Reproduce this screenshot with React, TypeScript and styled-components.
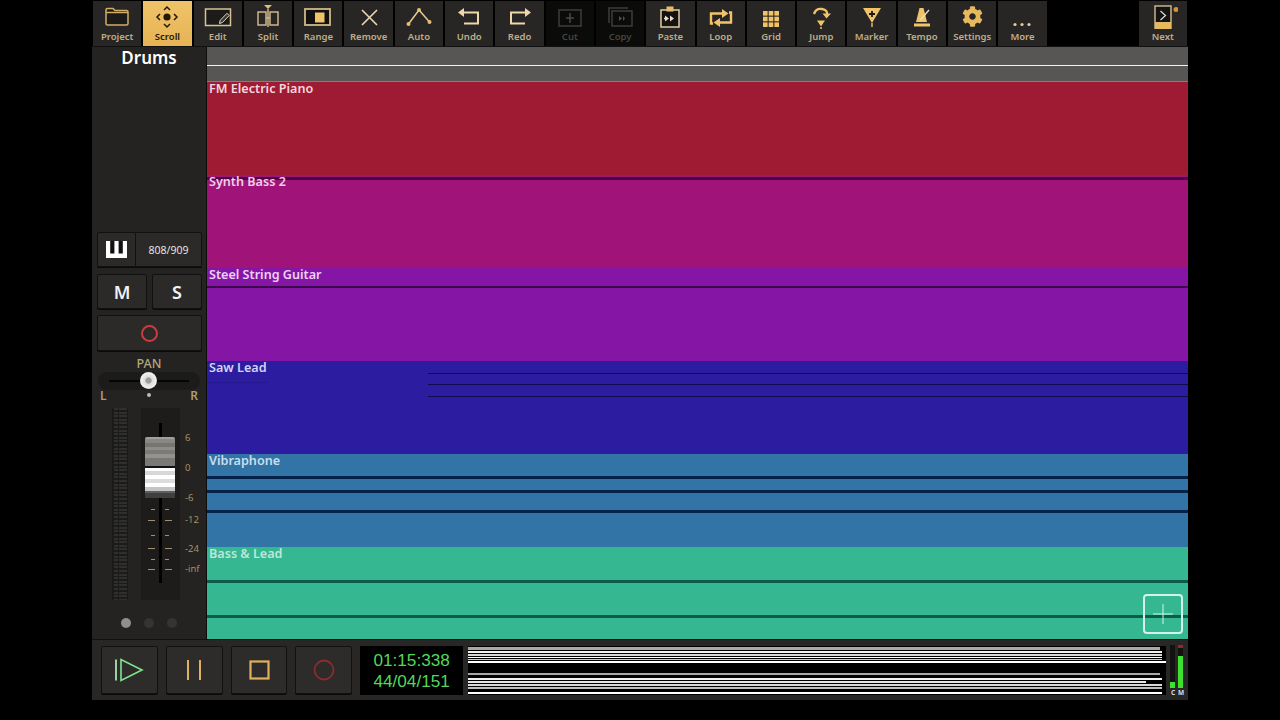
import React from "react";
import styled, { createGlobalStyle } from "styled-components";
import { FaCog } from "react-icons/fa";

const GOLD = "#e6bc6e";
const Global = createGlobalStyle`
  html, body { margin: 0; padding: 0; background: #000; }
  #root { width: 1280px; height: 720px; overflow: hidden; }
`;
const Page = styled.div`
  width: 1280px; height: 720px; background: #000; display: flex; justify-content: center;
  font-family: "Noto Sans", "Open Sans", sans-serif;
`;
const Frame = styled.div`
  width: 1096px; height: 700px; display: flex; flex-direction: column; background: #000;
`;
const Toolbar = styled.div`
  height: 47px; flex: none; display: flex; justify-content: space-between; padding: 1px 1px 0; box-sizing: border-box;
  border-bottom: 1px solid #111;
`;
const ToolGroup = styled.div` display: flex; gap: 2px; `;
const ToolButton = styled.div<{ $active?: boolean; $dim?: boolean }>`
  width: 48.3px; height: 45px; display: flex; flex-direction: column; align-items: center; box-sizing: border-box; padding-top: 4px;
  background: ${p => p.$active ? "linear-gradient(#f0c368,#e6b355)" : p.$dim ? "#0b0b0a" : "#272625"};
  color: ${p => p.$active ? "#241a08" : p.$dim ? "#45453f" : "#bfae88"};
  svg { display: block; flex: none; }
`;
const ToolLabel = styled.span`
  font-size: 9.5px; font-weight: 600; line-height: 12px; margin-top: 2px; white-space: nowrap;
`;
const Middle = styled.div` flex: 1; display: flex; min-height: 0; `;
const Panel = styled.div`
  width: 114px; flex: none; background: #242322; border-right: 1px solid #0d0d0d; display: flex; flex-direction: column; align-items: center;
  box-sizing: content-box;
`;
const Title = styled.div`
  font-size: 17px; font-weight: 600; line-height: 22px; color: #fff; height: 185px; text-align: center; width: 114px;
`;
const PanelBlock = styled.div`
  width: 105px; margin-left: 1px; display: flex; box-shadow: 0 1px 0 #0a0a0a;
`;
const KitButton = styled.div`
  width: 39px; height: 35px; background: #2b2a29; border: 1px solid #111; border-radius: 2px 0 0 2px; box-sizing: border-box;
  display: flex; align-items: center; justify-content: center;
`;
const KitName = styled.div`
  flex: 1; height: 35px; background: #2b2a29; border: 1px solid #111; border-left: 0; border-radius: 0 2px 2px 0; box-sizing: border-box;
  display: flex; align-items: center; justify-content: center; color: #eee; font-size: 10.500px; font-family: "Open Sans", sans-serif;
`;
const SoloRow = styled.div` width: 105px; margin-top: 7px; margin-left: 1px; display: flex; gap: 5px; `;
const SoloButton = styled.div`
  flex: 1; height: 35px; background: #2b2a29; border: 1px solid #111; border-radius: 2px; box-sizing: border-box; box-shadow: 0 1px 0 #0a0a0a;
  display: flex; align-items: center; justify-content: center; color: #f2f2f2; font-size: 18px; font-weight: 600;
`;
const RecButton = styled.div`
  width: 105px; height: 36px; margin-top: 6px; margin-left: 1px; background: #2b2a29; border: 1px solid #111; border-radius: 2px; box-sizing: border-box; box-shadow: 0 1px 0 #0a0a0a;
  display: flex; align-items: center; justify-content: center;
`;
const RecRing = styled.div`
  width: 17px; height: 17px; border: 2px solid #cf3a3a; border-radius: 50%; box-sizing: border-box;
`;
const PanHead = styled.div`
  color: #b9a57c; font-size: 12.500px; font-weight: 500; line-height: 14px; margin-top: 6px; height: 14px;
`;
const PanArea = styled.div` position: relative; width: 102px; height: 34px; margin-top: 1px; `;
const PanTrough = styled.div`
  height: 18px; border-radius: 9px; background: #1b1b1a; display: flex; align-items: center; justify-content: center;
`;
const PanLine = styled.div` width: 80px; height: 2px; background: #050505; `;
const PanKnob = styled.div`
  position: absolute; left: 42px; top: 0; width: 17px; height: 17px; border-radius: 50%;
  background: radial-gradient(circle at 50% 50%, #9d9d9d 0 22%, #dcdcdc 30%, #f0f0f0 60%, #b5b5b5 100%);
`;
const PanLetter = styled.span<{ $right?: boolean }>`
  position: absolute; top: 17px; ${p => p.$right ? "right: 2px" : "left: 2px"}; color: #b09b70; font-size: 12px; font-weight: 600; line-height: 14px;
`;
const PanDot = styled.div`
  position: absolute; left: 49px; top: 21px; width: 4px; height: 4px; background: #bbb; border-radius: 50%;
`;
const MixRow = styled.div` position: relative; width: 114px; height: 194px; margin-top: 2px; flex: none; `;
const MeterTrack = styled.div`
  position: absolute; left: 20px; top: 0; width: 16px; height: 192px; background: #1a1a19;
  background-image: linear-gradient(90deg, transparent 6.500px, #1a1a19 6.500px 7.500px, transparent 7.500px), repeating-linear-gradient(#302f2e 0 2px, #1c1c1b 2px 3.600px);
  background-size: 100% 100%, 13px 100%; background-repeat: no-repeat; background-position: center;
`;
const FaderWell = styled.div`
  position: absolute; left: 49px; top: 0; width: 39px; height: 192px; background: #1d1c1b;
`;
const FaderSlot = styled.div`
  position: absolute; left: 66.500px; top: 15px; width: 3px; height: 160px; background: #000;
`;
const Tick = styled.div<{ $y: number; $w: number }>`
  position: absolute; top: ${p => p.$y}px; width: 26px; left: 55px; height: 1px; display: flex; justify-content: center; gap: 10px;
  &::before, &::after { content: ""; width: ${p => p.$w}px; height: 1px; background: #a09070; }
`;
const FaderCap = styled.div`
  position: absolute; left: 53px; top: 29px; width: 30px; height: 61px; border-radius: 2px 2px 1px 1px; overflow: hidden;
  background: linear-gradient(#a2a09c 0 2px, #8a8884 2px 6px, #77756f 6px 10px, #8f8d89 10px 13px, #7d7b78 13px 17px, #94928f 17px 21px, #7b7976 21px 29px, #111 29px 31px,
    #fff 31px 34px, #d7d7d7 34px 38px, #fff 38px 42px, #dcdcdc 42px 46px, #fff 46px 50px, #c4c4c4 50px 54px, #5e5e5c 54px 56px, #403f3e 56px 61px);
`;
const Scale = styled.span<{ $y: number }>`
  position: absolute; left: 93px; top: ${p => p.$y}px; color: #ad9866; font-size: 9.500px; line-height: 12px; font-family: "Open Sans", sans-serif;
`;
const DotRow = styled.div` display: flex; gap: 13px; margin-top: 16px; `;
const Led = styled.div<{ $on?: boolean }>`
  width: 10px; height: 10px; border-radius: 50%; background: ${p => p.$on ? "#8f8f8d" : "#353432"};
`;
const Tracks = styled.div` flex: 1; position: relative; display: flex; flex-direction: column; min-width: 0; `;
const Lane = styled.div<{ $bg: string; $h: number }>`
  position: relative; height: ${p => p.$h}px; flex: none; background: ${p => p.$bg};
`;
const LaneLabel = styled.span<{ $c: string }>`
  position: absolute; z-index: 2; left: 2px; top: -2px; font-size: 12.600px; font-weight: 600; line-height: 18px; color: ${p => p.$c};
`;
const LaneLine = styled.div<{ $y: number; $c: string; $h?: number; $x?: number; $w?: number }>`
  position: absolute; left: ${p => p.$x ?? 0}px; ${p => p.$w ? `width: ${p.$w}px` : "right: 0"}; top: ${p => p.$y}px; height: ${p => p.$h ?? 3}px; background: ${p => p.$c};
`;
const AddButton = styled.div`
  position: absolute; z-index: 3; right: 5px; bottom: 5px; width: 40px; height: 40px; box-sizing: border-box; border: 2px solid #d3f3ea; border-radius: 4px;
  display: flex; align-items: center; justify-content: center;
`;
const Transport = styled.div`
  height: 61px; flex: none; background: #282726; border-top: 1px solid #101010; box-sizing: border-box; display: flex; align-items: flex-start; padding: 6px 0 0 9px;
`;
const TransButton = styled.div`
  width: 57px; height: 48px; margin-right: 8px; box-sizing: border-box; background: #2d2c2b; border: 1px solid #111; border-radius: 2px; box-shadow: 0 1px 0 #0a0a0a;
  display: flex; align-items: center; justify-content: center;
`;
const Clock = styled.div`
  width: 103px; height: 49px; background: #000; color: #52d85c; display: flex; flex-direction: column; align-items: center; justify-content: center;
  font-family: "Liberation Sans", sans-serif; font-size: 17.200px; line-height: 21px; padding-top: 1px; box-sizing: border-box;
`;
const Overview = styled.div`
  width: 698px; height: 49px; margin-left: 5px; background: #000; padding-top: 1px; box-sizing: border-box; display: flex; flex-direction: column;
`;
const Stripe = styled.div<{ $w: number; $h: number; $c: string; $m: number }>`
  width: ${p => p.$w}px; height: ${p => p.$h}px; background: ${p => p.$c}; margin-top: ${p => p.$m}px; flex: none;
`;
const Meters = styled.div` width: 22px; height: 54px; position: relative; flex: none; `;
const MeterBar = styled.div<{ $x: number; $h: number }>`
  position: absolute; left: ${p => p.$x}px; bottom: 12px; width: 5px; height: ${p => p.$h}px; background: #3fe02f;
`;
const MeterSlot = styled.div<{ $x: number }>`
  position: absolute; left: ${p => p.$x}px; top: -1px; bottom: 12px; width: 5px; background: #121211;
`;
const MeterPeak = styled.div`
  position: absolute; left: 12px; top: -1px; width: 5px; height: 3px; background: #8c2a33;
`;
const MeterLetter = styled.span<{ $x: number }>`
  position: absolute; left: ${p => p.$x}px; bottom: 3px; color: #ddd; font-size: 6.500px; font-weight: 700; line-height: 8px;
`;

const S: React.FC<React.PropsWithChildren<{ c?: string }>> = ({ children, c = GOLD }) => (
  <svg width="30" height="24" viewBox="0 0 30 24" fill="none" stroke={c} strokeWidth="1.500">{children}</svg>
);
const Folder = () => <S c="#d2ad68"><path d="M4 7V5q0-1.500 1.500-1.500H11L13 5.500H24.500Q26 5.500 26 7V18.500Q26 20 24.500 20H5.500Q4 20 4 18.500Z" fill="#1c1b1a" /><path d="M4 7.500H26" /></S>;
const Scroll = () => <S c="#241a08"><circle cx="15" cy="12" r="3.600" fill="#241a08" stroke="none" /><path d="M12 5l3-3 3 3M12 19l3 3 3-3M8 9l-3 3 3 3M22 9l3 3-3 3" /></S>;
const Edit = () => <S c="#d9c294"><rect x="2.500" y="4" width="25" height="16.500" fill="#1c1b1a" /><path d="M16.500 18.500l.7-3.200 6.800-7 2.200 2.200-6.800 7Z" stroke="#e6dcc4" strokeWidth="1" fill="#3a3935" /></S>;
const Split = () => <S c="#cdb78c"><path d="M11 0h8l-4 4Z" fill={GOLD} stroke="none" /><path d="M13 7H5v13h8ZM17 7h8v13h-8ZM15 4v18M13 13h4" /></S>;
const Range = () => <S><rect x="2" y="4" width="25" height="16" fill="#111" stroke="#d2b888" strokeWidth="1.800" /><rect x="12" y="7.500" width="9.500" height="10" fill="#f0c368" stroke="none" /></S>;
const Remove = () => <S c="#ecd8ae"><path d="M8 5l15 15M23 5L8 20" strokeWidth="1.600" /></S>;
const Auto = () => <S c="#e4c88e"><path d="M4.500 19L15 5l10.500 12" /><circle cx="4.500" cy="19" r="2" fill={GOLD} stroke="none" /><circle cx="15" cy="5" r="2" fill={GOLD} stroke="none" /><circle cx="25.500" cy="17" r="2" fill={GOLD} stroke="none" /></S>;
const Undo = () => <S c="#eed7a8"><path d="M6 7.500H24V18.500H10" strokeWidth="2" /><path d="M10 3L4 7.500 10 12" fill="#eed7a8" stroke="none" /></S>;
const Redo = () => <S c="#eed7a8"><path d="M23 7.500H6V18.500H20" strokeWidth="2" /><path d="M20 3L26 7.500 20 12" fill="#eed7a8" stroke="none" /></S>;
const Cut = () => <S c="#3e3e39"><rect x="4" y="5" width="22" height="16" /><path d="M15 8v10M11 13h8" stroke="#4a4a44" /></S>;
const Copy = () => <S c="#3e3e39"><path d="M4 18V3H23" /><rect x="7" y="6" width="20" height="15" /><path d="M14 11l3 2.500-3 2.500ZM18 11l2 2.500-2 2.500Z" fill="#50504a" stroke="none" /></S>;
const Paste = () => <S c="#e2cda0"><rect x="6" y="5" width="18" height="17" fill="#141312" /><rect x="11.500" y="1.500" width="7" height="5" fill="#e6bc6e" stroke="none" /><path d="M10 10.500l4 3-4 3ZM15 10.500l4 3-4 3Z" fill="#eadfc6" stroke="none" /><path d="M9 13.500h2" stroke="#eadfc6" /></S>;
const Loop = () => <S c="#f0c368"><path d="M7 18.500H5V8.500H18" strokeWidth="2.400" /><path d="M16 4l6.500 4.500L16 13Z" fill="#f0c368" stroke="none" /><path d="M23 7.500H25V17.500H12" strokeWidth="2.400" /><path d="M14 13l-6.500 4.500L14 22Z" fill="#f0c368" stroke="none" /></S>;
const Grid = () => {
  const cells: number[][] = [];
  for (let r = 0; r < 3; r++) for (let k = 0; k < 3; k++) cells.push([k, r]);
  return <S>{cells.map(([k, r]) => <rect key={`${k}${r}`} x={7 + k * 5.700} y={6 + r * 5.700} width="4.600" height="4.600" fill="#f0c368" stroke="none" />)}</S>;
};
const Jump = () => <S c="#f0c368"><path d="M8 9q2-6 8-5t5 6" strokeWidth="2.400" /><path d="M16.500 8.500h8.500l-4.500 5Z" fill="#f0c368" stroke="none" /><path d="M11 15.500h8l-4 6Z" fill="#f0c368" stroke="none" /><path d="M15 22v2" /></S>;
const Marker = () => <S><path d="M6 3h18l-9 15Z" fill="#f0c368" stroke="none" /><path d="M15 6v6M12 9h6" stroke="#1c1b1a" strokeWidth="1.800" /><path d="M15 18v4" strokeWidth="1.500" /></S>;
const Tempo = () => <S><path d="M12.500 3h4l3.500 14H9Z" fill="#f0c368" stroke="none" /><path d="M13.500 15L22 5" stroke="#eee0c0" strokeWidth="1.300" /><path d="M7 18.500h16v3H7Z" fill="#f0c368" stroke="none" /></S>;
const Dots = () => <S><circle cx="8" cy="19.500" r="1.600" fill="#e4cc98" stroke="none" /><circle cx="15" cy="19.500" r="1.600" fill="#e4cc98" stroke="none" /><circle cx="22" cy="19.500" r="1.600" fill="#e4cc98" stroke="none" /></S>;
const Gear = () => <FaCog size={21} color="#e6b95f" style={{ margin: "1px 0 2px" }} />;
const Next = () => <S c="#c9b48a"><rect x="7" y="1" width="16" height="23" fill="#141312" /><path d="M7 17h16v7H7Z" fill="#e6b95f" stroke="none" /><path d="M12.500 6l5 4.500-5 4.500" stroke="#ddd" strokeWidth="1.200" /><circle cx="28" cy="4.500" r="2.500" fill="#d99030" stroke="none" /></S>;

const tools: { name: string; icon: React.ReactNode; active?: boolean; dim?: boolean }[] = [
  { name: "Project", icon: <Folder /> }, { name: "Scroll", icon: <Scroll />, active: true }, { name: "Edit", icon: <Edit /> },
  { name: "Split", icon: <Split /> }, { name: "Range", icon: <Range /> }, { name: "Remove", icon: <Remove /> }, { name: "Auto", icon: <Auto /> },
  { name: "Undo", icon: <Undo /> }, { name: "Redo", icon: <Redo /> }, { name: "Cut", icon: <Cut />, dim: true }, { name: "Copy", icon: <Copy />, dim: true },
  { name: "Paste", icon: <Paste /> }, { name: "Loop", icon: <Loop /> }, { name: "Grid", icon: <Grid /> }, { name: "Jump", icon: <Jump /> },
  { name: "Marker", icon: <Marker /> }, { name: "Tempo", icon: <Tempo /> }, { name: "Settings", icon: <Gear /> }, { name: "More", icon: <Dots /> },
];

type Ln = { y: number; c: string; h?: number; x?: number; w?: number };
const lanes: { name: string; bg: string; c: string; h: number; lines: Ln[] }[] = [
  { name: "FM Electric Piano", bg: "#9f1a33", c: "#f3d8dd", h: 93, lines: [] },
  { name: "Synth Bass 2", bg: "#a0147a", c: "#f3cfe8", h: 93, lines: [{ y: 2, c: "#48083f", h: 3 }] },
  { name: "Steel String Guitar", bg: "#8516a5", c: "#ecd2f4", h: 93, lines: [{ y: 18, c: "#3a0a4c", h: 2 }] },
  { name: "Saw Lead", bg: "#2b1ca0", c: "#d6d2f4", h: 93, lines: [
    { y: 12, c: "#100a50", h: 1, x: 221 }, { y: 23, c: "#100a50", h: 1, x: 221 }, { y: 35, c: "#100a50", h: 1, x: 221 }, { y: 21, c: "#241890", h: 1, w: 61 },
  ] },
  { name: "Vibraphone", bg: "#3274a6", c: "#c9deec", h: 93, lines: [{ y: 22, c: "#04214a" }, { y: 36, c: "#04214a" }, { y: 56, c: "#04214a" }] },
  { name: "Bass & Lead", bg: "#35b892", c: "#bfe6d9", h: 92, lines: [{ y: 33, c: "#0d5b49" }, { y: 68, c: "#0d5b49" }] },
];

const stripes = [
  { w: 692, h: 3, c: "#a8a8a8", m: 0 }, { w: 694, h: 2, c: "#f0f0f0", m: 1 }, { w: 694, h: 2, c: "#d8d8d8", m: 1 },
  { w: 694, h: 1, c: "#fff", m: 1 }, { w: 694, h: 1, c: "#d0d0d0", m: 1 }, { w: 698, h: 2, c: "#fff", m: 1 },
  { w: 692, h: 2, c: "#a8a8a8", m: 10 }, { w: 694, h: 2, c: "#f0f0f0", m: 3 }, { w: 678, h: 2, c: "#e4e4e4", m: 1 },
  { w: 694, h: 2, c: "#d8d8d8", m: 1 }, { w: 694, h: 2, c: "#bdbdbd", m: 1 }, { w: 694, h: 2, c: "#fff", m: 3 },
];

const ticks = [[101, 4], [112, 7], [127, 4], [140, 7], [151, 4], [161, 7]];
const scale = [[24, "6"], [54, "0"], [84, "-6"], [106, "-12"], [135, "-24"], [155, "-inf"]] as const;

export default function App() {
  return (
    <Page>
      <Global />
      <Frame>
        <Toolbar>
          <ToolGroup>
            {tools.map(t => (
              <ToolButton key={t.name} $active={t.active} $dim={t.dim}>
                {t.icon}
                <ToolLabel>{t.name}</ToolLabel>
              </ToolButton>
            ))}
          </ToolGroup>
          <ToolButton><Next /><ToolLabel>Next</ToolLabel></ToolButton>
        </Toolbar>
        <Middle>
          <Panel>
            <Title>Drums</Title>
            <PanelBlock>
              <KitButton>
                <svg width="21" height="17" viewBox="0 0 21 17"><path d="M0 0h21v17H0Z" fill="#fff" /><path d="M4.200 0h4.200v12.500H4.200ZM12.600 0h4.200v12.500h-4.200Z" fill="#111" /></svg>
              </KitButton>
              <KitName>808/909</KitName>
            </PanelBlock>
            <SoloRow><SoloButton>M</SoloButton><SoloButton>S</SoloButton></SoloRow>
            <RecButton><RecRing /></RecButton>
            <PanHead>PAN</PanHead>
            <PanArea>
              <PanTrough><PanLine /></PanTrough>
              <PanKnob />
              <PanLetter>L</PanLetter>
              <PanLetter $right>R</PanLetter>
              <PanDot />
            </PanArea>
            <MixRow>
              <MeterTrack />
              <FaderWell />
              <FaderSlot />
              {ticks.map(([y, w]) => <Tick key={y} $y={y} $w={w} />)}
              <FaderCap />
              {scale.map(([y, t]) => <Scale key={t} $y={y}>{t}</Scale>)}
            </MixRow>
            <DotRow><Led $on /><Led /><Led /></DotRow>
          </Panel>
          <Tracks>
            <Lane $bg="#585654" $h={35}>
              <LaneLine $y={18} $c="#f2f2f2" $h={1} />
              <LaneLine $y={34} $c="#8c7a7c" $h={1} />
            </Lane>
            {lanes.map(l => (
              <Lane key={l.name} $bg={l.bg} $h={l.h}>
                {l.lines.map(ln => <LaneLine key={ln.y} $y={ln.y} $c={ln.c} $h={ln.h} $x={ln.x} $w={ln.w} />)}
                <LaneLabel $c={l.c}>{l.name}</LaneLabel>
              </Lane>
            ))}
            <AddButton>
              <svg width="20" height="20" viewBox="0 0 20 20" stroke="#d3f3ea" strokeWidth="1"><path d="M10 0v20M0 10h20" /></svg>
            </AddButton>
          </Tracks>
        </Middle>
        <Transport>
          <TransButton>
            <svg width="30" height="26" viewBox="0 0 30 26" fill="none" stroke="#7fe58d" strokeWidth="1.600"><path d="M2 2.500v21" stroke="#c5f5cc" /><path d="M7 2.500v21L28 13Z" /></svg>
          </TransButton>
          <TransButton>
            <svg width="18" height="22" viewBox="0 0 18 22" fill="none" stroke="#dcb260" strokeWidth="2"><path d="M3 1v20M15 1v20" /></svg>
          </TransButton>
          <TransButton>
            <svg width="21" height="20" viewBox="0 0 21 20" fill="none" stroke="#e0b060" strokeWidth="2.200"><rect x="1.500" y="1.500" width="18" height="17" /></svg>
          </TransButton>
          <TransButton>
            <svg width="22" height="22" viewBox="0 0 22 22" fill="none" stroke="#8a2c2e" strokeWidth="1.800"><circle cx="11" cy="11" r="9.500" /></svg>
          </TransButton>
          <Clock><span>01:15:338</span><span>44/04/151</span></Clock>
          <Overview>
            {stripes.map((s, i) => <Stripe key={i} $w={s.w} $h={s.h} $c={s.c} $m={s.m} />)}
          </Overview>
          <Meters>
            <MeterSlot $x={4} /><MeterSlot $x={12} />
            <MeterBar $x={4} $h={6} /><MeterBar $x={12} $h={32} />
            <MeterPeak />
            <MeterLetter $x={5}>C</MeterLetter><MeterLetter $x={12}>M</MeterLetter>
          </Meters>
        </Transport>
      </Frame>
    </Page>
  );
}
